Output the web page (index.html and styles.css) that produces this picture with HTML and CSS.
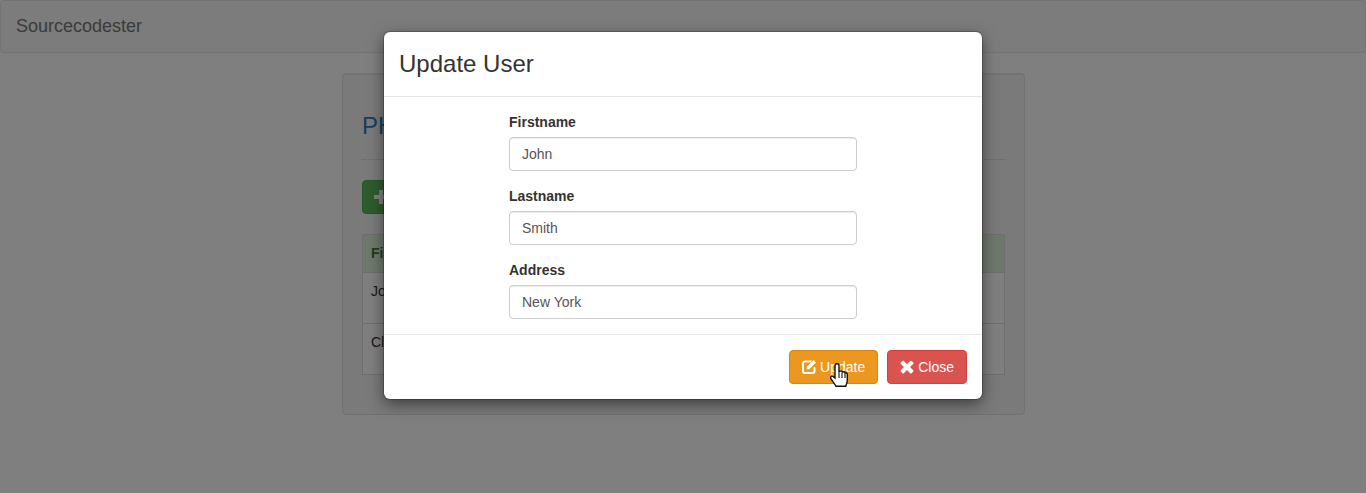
FILE: index.html
```html
<!DOCTYPE html>
<html lang="en">
<head>
<meta charset="utf-8">
<title>Update User</title>
<link rel="stylesheet" href="styles.css">
</head>
<body>
<nav class="navbar"><a class="brand">Sourcecodester</a></nav>
<main class="well">
  <h3 class="page-title">PHP - CRUD</h3>
  <hr class="dotted">
  <button class="btn btn-add"><svg class="icon" viewBox="0 0 14 14"><path d="M5 0h4v5h5v4H9v5H5V9H0V5h5z" fill="#fff"/></svg> Add</button>
  <table class="grid">
    <thead><tr><th>Firstname</th><th>Lastname</th><th>Address</th><th>Action</th></tr></thead>
    <tbody>
      <tr><td>John</td><td>Smith</td><td>New York</td><td></td></tr>
      <tr><td>Claire</td><td>Temple</td><td>Boston</td><td></td></tr>
    </tbody>
  </table>
</main>
<div class="backdrop"></div>
<div class="modal-layer">
  <section class="modal">
    <header class="modal-header"><h3>Update User</h3></header>
    <div class="modal-body">
      <div class="form-group"><label>Firstname</label><input class="form-control" value="John"></div>
      <div class="form-group"><label>Lastname</label><input class="form-control" value="Smith"></div>
      <div class="form-group"><label>Address</label><input class="form-control" value="New York"></div>
    </div>
    <footer class="modal-footer">
      <button class="btn btn-warning"><svg class="icon" viewBox="0 0 14 14"><path d="M9.500 1.500H3A2 2 0 0 0 1 3.500v7.500a2 2 0 0 0 2 2h7.500a2 2 0 0 0 2-2V7" fill="none" stroke="#fff" stroke-width="2"/><path d="M11.600 0 14 2.400 7.200 9.300H4.700V6.800z" fill="#fff"/></svg> Update</button>
      <button class="btn btn-danger"><svg class="icon" viewBox="0 0 14 14"><path d="M3.800 1 7 4.200 10.200 1a1 1 0 0 1 1.400 0L13.200 2.600a1 1 0 0 1 0 1.400L10 7l3.200 3.200a1 1 0 0 1 0 1.400l-1.600 1.600a1 1 0 0 1-1.400 0L7 10 3.800 13.200a1 1 0 0 1-1.400 0L.8 11.600a1 1 0 0 1 0-1.400L4 7 .8 4a1 1 0 0 1 0-1.400L2.400 1a1 1 0 0 1 1.400 0z" fill="#fff"/></svg> Close</button>
    </footer>
    <svg class="hand" viewBox="0 0 18 24"><path d="M7 .8c1.200 0 2 .8 2 2V8.200h1c1.500-.5 2.500 0 2.800.8 1.200-.4 2.200 0 2.500.8 1-.2 2 .5 2 1.500V17c0 2.500-1 4-1.500 6.300H6C5 21 3 19 1 16 0 14 1.500 12.500 3 13.500L5 15V2.800C5 1.600 5.800.8 7 .8z" fill="#fff" stroke="#111" stroke-width="1.400"/><path d="M9 9v6M12 9.500V15M15 10v5" stroke="#111" stroke-width="1.100" fill="none"/></svg>
  </section>
</div>
</body>
</html>
```
FILE: styles.css
```css
* { box-sizing: border-box; }
html, body { margin: 0; height: 493px; overflow: hidden; }
body { background: #fff; color: #333; font: 14px/20px "Liberation Sans", Arial, sans-serif; position: relative; }
.navbar { height: 53px; background: #f8f8f8; border: 1px solid #e7e7e7; border-radius: 4px; padding: 15px; margin-bottom: 20px; }
.brand { font-size: 18px; line-height: 20px; color: #777; display: block; }
.well { width: 683px; height: 342px; margin-left: 342px; padding: 19px; background: #f5f5f5; border: 1px solid #e3e3e3; border-radius: 4px; box-shadow: inset 0 1px 1px rgba(0,0,0,.05); }
.page-title { margin: 20px 0 10px; font-size: 24px; font-weight: 500; line-height: 26px; color: #337ab7; }
.dotted { border: 0; border-top: 1px dotted #ccc; margin: 20px 0; }
.btn { display: inline-flex; align-items: center; height: 34px; padding: 6px 12px; font: 14px/20px "Liberation Sans", Arial, sans-serif; color: #fff; border: 1px solid transparent; border-radius: 4px; gap: 4px; }
.btn-add { background: #5cb85c; border-color: #4cae4c; padding-left: 11px; }
.btn-warning { background: #ec971f; border-color: #d58512; }
.btn-danger { background: #d9534f; border-color: #d43f3a; }
.icon { width: 14px; height: 14px; display: block; }
.grid { width: 100%; margin-top: 20px; border-collapse: collapse; background: #fff; }
.grid th, .grid td { border: 1px solid #ddd; padding: 8px; vertical-align: top; text-align: left; }
.grid th { background: #dff0d8; color: #3c763d; height: 38px; }
.grid td { height: 51px; }
.backdrop { position: absolute; inset: 0; background: #000; opacity: .5; }
.modal-layer { position: absolute; inset: 0; }
.modal { position: absolute; left: 384px; top: 32px; width: 598px; height: 367px; background: #fff; border-radius: 6px; box-shadow: 0 0 0 1px rgba(0,0,0,.2), 0 5px 15px rgba(0,0,0,.5); }
.modal-header { height: 65px; padding: 15px; border-bottom: 1px solid #e5e5e5; }
.modal-header h3 { margin: 0; font-size: 24px; font-weight: 500; line-height: 33px; }
.modal-body { height: 237px; padding: 15px 15px 0 125px; }
.form-group { width: 348px; height: 74px; }
label { display: block; font-weight: 700; margin-bottom: 5px; line-height: 20px; }
.form-control { display: block; width: 100%; height: 34px; padding: 6px 12px; font: 14px/20px "Liberation Sans", Arial, sans-serif; color: #555; border: 1px solid #ccc; border-radius: 4px; box-shadow: inset 0 1px 1px rgba(0,0,0,.075); }
.modal-footer { height: 65px; padding: 15px; border-top: 1px solid #e5e5e5; display: flex; justify-content: flex-end; gap: 9px; }
.hand { position: absolute; left: 446px; top: 331px; width: 18px; height: 24px; }
```
